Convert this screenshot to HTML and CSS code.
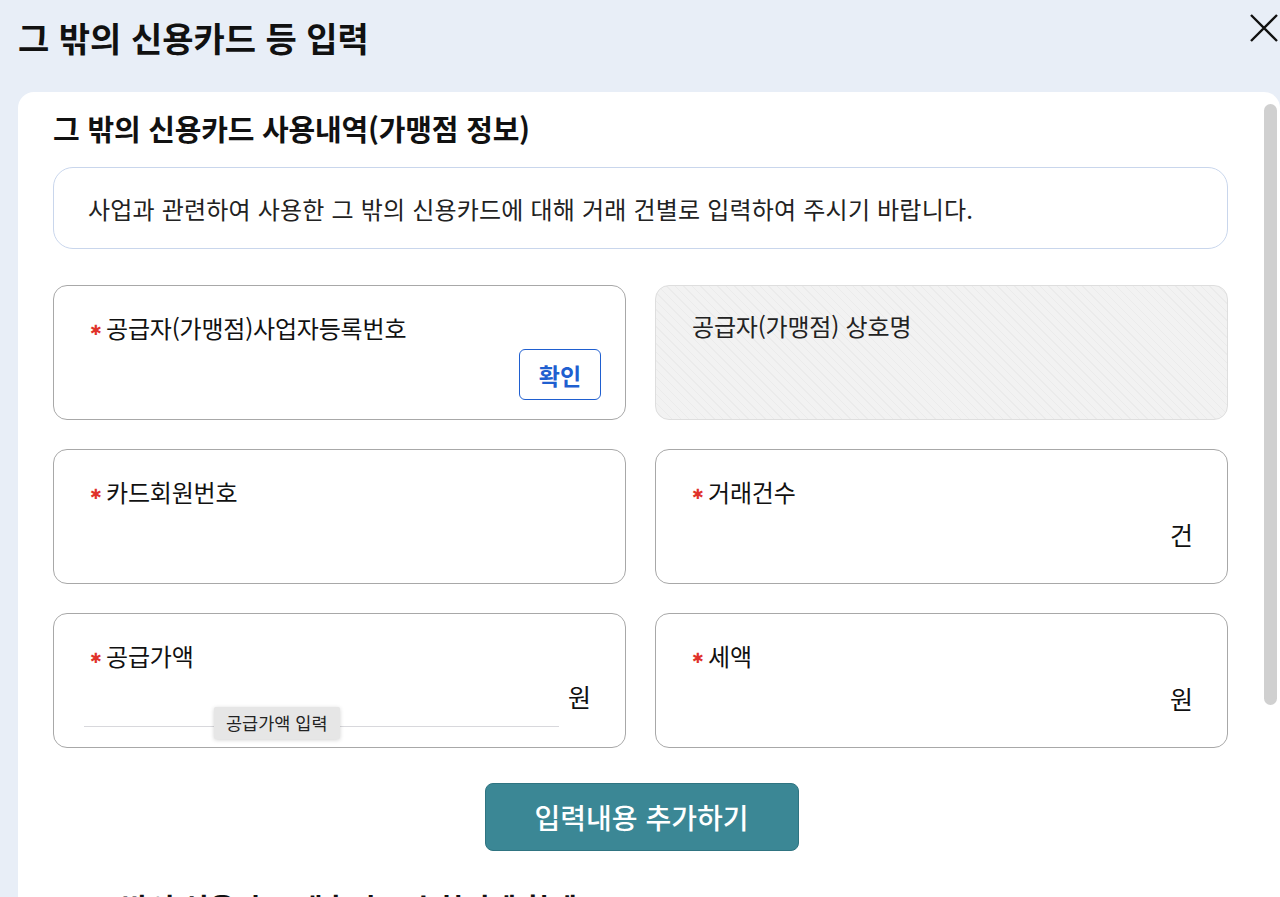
FILE: index.html
```html
<!DOCTYPE html>
<html lang="ko">
<head>
<meta charset="utf-8">
<title>그 밖의 신용카드 등 입력</title>
<link rel="stylesheet" href="styles.css">
</head>
<body>
<div class="dialog">
  <header class="dlg-head">
    <h1 class="dlg-title">그 밖의 신용카드 등 입력</h1>
    <button class="close" aria-label="닫기">
      <svg width="28" height="28" viewBox="0 0 28 28"><path d="M1 1 L27 27 M27 1 L1 27" stroke="#111" stroke-width="2.4" fill="none"/></svg>
    </button>
  </header>
  <main class="panel">
    <h2 class="sec-title">그 밖의 신용카드 사용내역(가맹점 정보)</h2>
    <div class="notice">사업과 관련하여 사용한 그 밖의 신용카드에 대해 거래 건별로 입력하여 주시기 바랍니다.</div>
    <div class="grid">
      <div class="field">
        <div class="label"><span class="req">✱</span>공급자(가맹점)사업자등록번호</div>
        <div class="row end"><button class="btn-check">확인</button></div>
      </div>
      <div class="field disabled">
        <div class="label plain">공급자(가맹점) 상호명</div>
      </div>
      <div class="field">
        <div class="label"><span class="req">✱</span>카드회원번호</div>
      </div>
      <div class="field">
        <div class="label"><span class="req">✱</span>거래건수</div>
        <div class="row end"><span class="unit">건</span></div>
      </div>
      <div class="field">
        <div class="label"><span class="req">✱</span>공급가액</div>
        <div class="row input-row">
          <div class="input-line"><span class="tip">공급가액 입력</span></div>
          <span class="unit">원</span>
        </div>
      </div>
      <div class="field">
        <div class="label"><span class="req">✱</span>세액</div>
        <div class="row end"><span class="unit">원</span></div>
      </div>
    </div>
    <div class="actions"><button class="btn-add">입력내용 추가하기</button></div>
    <h2 class="sec-title next">그 밖의 신용카드 매출전표 수취명세 합계</h2>
    <div class="scrollbar"></div>
  </main>
</div>
</body>
</html>
```
FILE: styles.css
```css
* { box-sizing: border-box; }
html, body { margin: 0; padding: 0; }
body {
  width: 1280px;
  height: 897px;
  overflow: hidden;
  background: #e8eef7;
  font-family: "Noto Sans CJK KR", "Noto Sans", sans-serif;
  color: #111;
}
.dialog { display: flex; flex-direction: column; }
.dlg-head {
  display: flex;
  align-items: flex-start;
  justify-content: space-between;
  height: 92px;
  padding: 13px 2px 0 18px;
}
.dlg-title {
  margin: 0;
  font-size: 34px;
  font-weight: 700;
  line-height: 50px;
}
.close {
  border: 0;
  background: none;
  padding: 0;
  margin-top: 1px;
  width: 28px;
  height: 28px;
  cursor: pointer;
}
.panel {
  position: relative;
  margin-left: 18px;
  background: #fff;
  border-radius: 16px 16px 0 0;
  padding: 10px 52px 0 35px;
  height: 805px;
  overflow: hidden;
}
.sec-title {
  margin: 0;
  font-size: 29px;
  font-weight: 700;
  line-height: 52px;
  letter-spacing: -0.2px;
}
.notice {
  margin-top: 13px;
  height: 82px;
  border: 1px solid #c9d6ec;
  border-radius: 20px;
  padding: 0 34px;
  display: flex;
  align-items: center;
  font-size: 24px;
  letter-spacing: 0.2px;
  color: #222;
}
.grid {
  margin-top: 36px;
  display: grid;
  grid-template-columns: 1fr 1fr;
  column-gap: 29px;
  row-gap: 29px;
}
.field {
  height: 135px;
  border: 1px solid #a8a8a8;
  border-radius: 14px;
  padding: 22px 34px 0 36px;
  display: flex;
  flex-direction: column;
}
.field.disabled {
  border-color: #dedede;
  background: repeating-linear-gradient(45deg, #f2f2f2 0 5px, #ebebeb 5px 6px);
}
.label {
  font-size: 24px;
  line-height: 36px;
  display: flex;
  align-items: center;
  letter-spacing: -0.2px;
}
.label.plain { color: #222; }
.req {
  color: #e0322b;
  font-family: "DejaVu Sans", sans-serif;
  font-size: 14px;
  width: 16px;
  margin-left: 0;
  margin-top: 4px;
}
.row { display: flex; align-items: center; }
.row.end { justify-content: flex-end; margin-top: 1px; }
.btn-check {
  width: 82px;
  height: 51px;
  border: 1.5px solid #1f5fd0;
  border-radius: 6px;
  background: #fff;
  color: #1f5fd0;
  font-family: inherit;
  font-size: 23px;
  font-weight: 700;
  margin-right: -10px;
  padding: 0;
}
.unit {
  font-size: 25px;
  line-height: 36px;
  margin-top: 3px;
}
.input-row {
  margin-left: -6px;
  align-items: flex-end;
  margin-top: 2px;
}
.input-row .unit { margin-left: 9px; margin-top: 0; margin-bottom: 13px; }
.input-line {
  position: relative;
  flex: 1;
  height: 1px;
  background: #d8d8dc;
  margin-top: 47px;
}
.tip {
  position: absolute;
  left: 130px;
  top: -19px;
  height: 32px;
  padding: 0 12px;
  background: #e6e6e6;
  border-radius: 2px;
  box-shadow: 0 1px 4px rgba(0,0,0,0.18);
  font-size: 17.5px;
  line-height: 32px;
  color: #222;
  white-space: nowrap;
}
.actions {
  display: flex;
  justify-content: center;
  margin-top: 35px;
}
.btn-add {
  width: 314px;
  height: 68px;
  border: 1px solid #2f7481;
  border-radius: 8px;
  background: #3b8795;
  color: #fff;
  font-family: inherit;
  font-size: 28px;
  font-weight: 500;
  margin-left: 2px;
}
.sec-title.next { margin-top: 30px; padding-left: 34px; }
.scrollbar {
  position: absolute;
  right: 3px;
  top: 12px;
  width: 13px;
  height: 601px;
  border-radius: 7px;
  background: #d0d0d0;
}
```
